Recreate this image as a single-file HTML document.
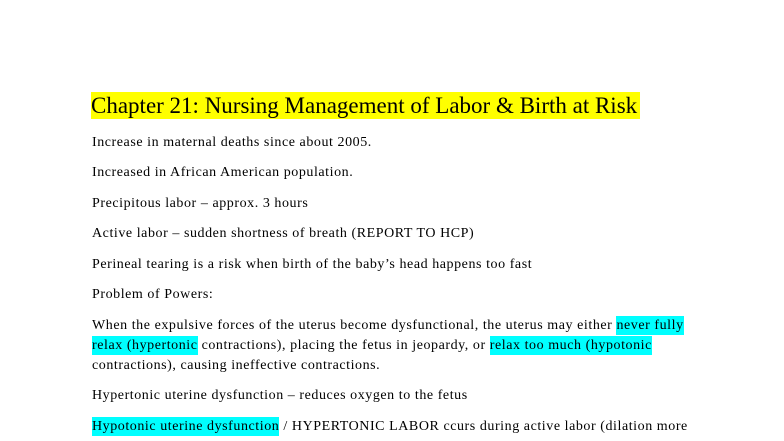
<!DOCTYPE html>
<html><head><meta charset="utf-8"><style>
html,body{margin:0;padding:0;background:#fff;width:784px;height:441px;overflow:hidden}
body{font-family:"Liberation Serif",serif;color:#000;position:relative}
.l{position:absolute;left:92px;font-size:14px;line-height:20px;white-space:nowrap;letter-spacing:0.56px}
.h{background:#00ffff;padding:2px 0}
.t{position:absolute;left:91px;top:92px;height:27px;width:549px;background:#ffff00;font-size:23px;line-height:27px;white-space:nowrap}
</style></head><body>
<div class="t">Chapter 21: Nursing Management of Labor &amp; Birth at Risk</div>
<div class="l" style="top:133px">Increase in maternal deaths since about 2005.</div>
<div class="l" style="top:163px">Increased in African American population.</div>
<div class="l" style="top:194px">Precipitous labor – approx. 3 hours</div>
<div class="l" style="top:224px">Active labor – sudden shortness of breath (REPORT TO HCP)</div>
<div class="l" style="top:255px">Perineal tearing is a risk when birth of the baby’s head happens too fast</div>
<div class="l" style="top:285px">Problem of Powers:</div>
<div class="l" style="top:316px">When the expulsive forces of the uterus become dysfunctional, the uterus may either <span class="h">never fully</span></div>
<div class="l" style="top:336px"><span class="h">relax (hypertonic</span> contractions), placing the fetus in jeopardy, or <span class="h">relax too much (hypotonic</span></div>
<div class="l" style="top:356px">contractions), causing ineffective contractions.</div>
<div class="l" style="top:386px">Hypertonic uterine dysfunction – reduces oxygen to the fetus</div>
<div class="l" style="top:417px"><span class="h">Hypotonic uterine dysfunction</span> / HYPERTONIC LABOR ccurs during active labor (dilation more</div>
</body></html>
